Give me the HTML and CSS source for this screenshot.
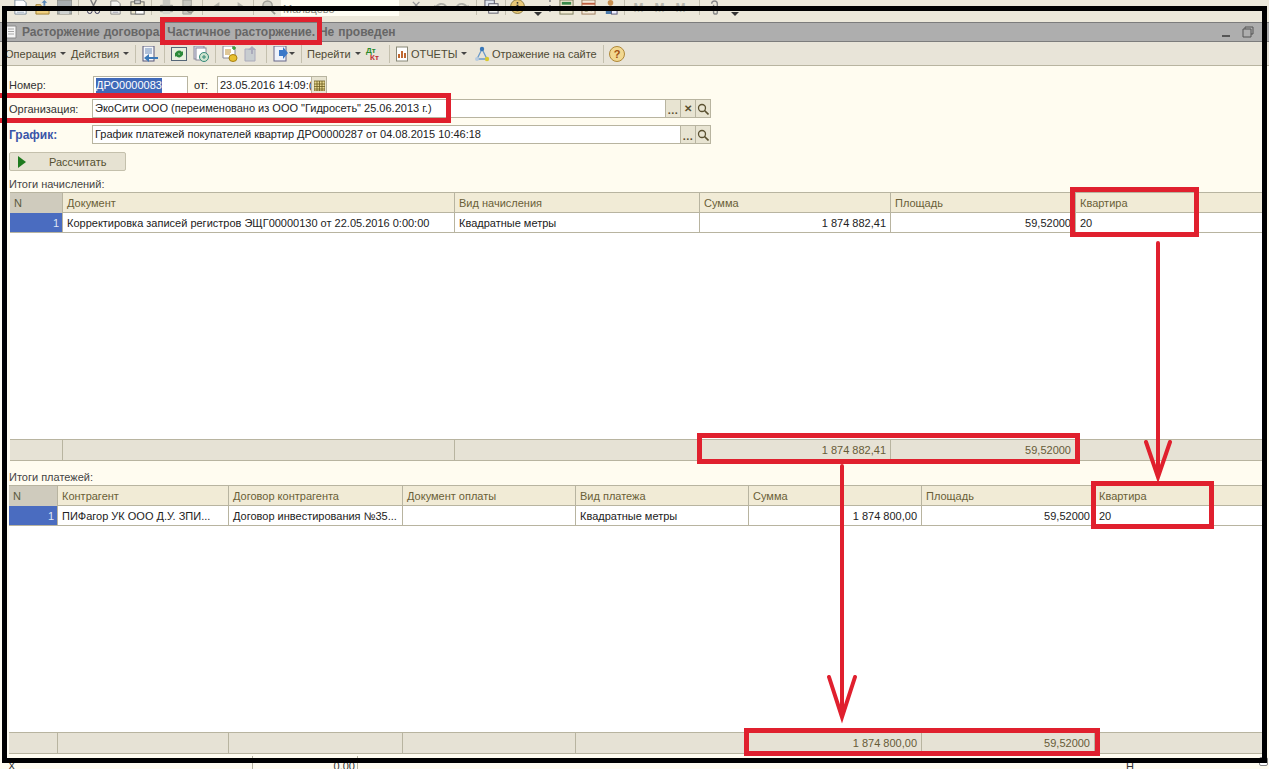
FILE: index.html
```html
<!DOCTYPE html>
<html lang="ru">
<head>
<meta charset="utf-8">
<title>Расторжение договора</title>
<link rel="stylesheet" href="styles.css">
</head>
<body>
<div class="app">
  <div class="topbar">
    <span class="tb"><svg viewBox="0 0 16 16"><path d="M2 0h9l3 3v12H2z" fill="#fff" stroke="#7a8a9a"/><path d="M4 11h8M4 13h8" stroke="#9ab"/></svg></span>
    <span class="tb"><svg viewBox="0 0 16 16"><path d="M1 5h5l1 2h8v8H1z" fill="#f0d080" stroke="#a08030"/><path d="M10 0l3 3h-2v3h-2V3H7z" fill="#5a88b8"/></svg></span>
    <span class="tb"><svg viewBox="0 0 16 16"><rect x="0" y="0" width="16" height="15" fill="#a8aeb0" stroke="#8a8a80"/><rect x="3" y="9" width="10" height="6" fill="#cfd2d0"/></svg></span>
    <i class="sep"></i>
    <span class="tb"><svg viewBox="0 0 16 16"><path d="M5 0l5 10M11 0L6 10" stroke="#777" stroke-width="1.5" fill="none"/><circle cx="4" cy="12" r="2.4" fill="none" stroke="#335"/><circle cx="12" cy="12" r="2.4" fill="none" stroke="#335"/></svg></span>
    <span class="tb"><svg viewBox="0 0 16 16"><path d="M3 1h7l3 3v11H3z" fill="#f4f4f0" stroke="#888"/><path d="M5 7h6M5 10h6M5 13h6" stroke="#99a"/></svg></span>
    <span class="tb"><svg viewBox="0 0 16 16"><rect x="1" y="2" width="14" height="13" fill="#eee8d0" stroke="#666"/><rect x="5" y="0" width="6" height="4" fill="#ccc" stroke="#666"/><rect x="6" y="8" width="9" height="7" fill="#fff" stroke="#777"/></svg></span>
    <i class="sep"></i>
    <span class="tb"><svg viewBox="0 0 16 16"><rect x="1" y="5" width="14" height="8" rx="1" fill="#a9a9a2"/><rect x="4" y="0" width="8" height="6" fill="#c8c8c0"/><rect x="4" y="11" width="8" height="4" fill="#d8d8d0"/></svg></span>
    <span class="tb"><svg viewBox="0 0 16 16"><path d="M2 0h9v15H2z" fill="#c8c8c0" stroke="#a0a098"/><circle cx="10" cy="10" r="3.5" fill="#b0b0a8" stroke="#8a8a82"/></svg></span>
    <i class="sep"></i>
    <span class="tb"><svg viewBox="0 0 16 16"><path d="M10 2L3 7l7 5z" fill="#b8b8ae"/></svg></span>
    <span class="tb"><svg viewBox="0 0 16 16"><path d="M6 2l7 5-7 5z" fill="#b8b8ae"/></svg></span>
    <i class="sep"></i>
    <span class="tb"><svg viewBox="0 0 16 16"><circle cx="7" cy="6" r="5" fill="#cfcfc4" stroke="#a0a098" stroke-width="1.5"/><path d="M10 10l5 5" stroke="#9a9a90" stroke-width="2"/></svg></span>
    <span class="searchbox">Мальцево</span>
    <span class="tb tb-x"><svg viewBox="0 0 16 16"><path d="M2 2l7 7M9 2L2 9" stroke="#999" stroke-width="1.5"/></svg></span>
    <span class="tb"><svg viewBox="0 0 16 16"><path d="M3 9a6 6 0 0 1 11-2" fill="none" stroke="#b0b0a8" stroke-width="2"/><path d="M1 5l2 5 4-2z" fill="#b0b0a8"/></svg></span>
    <span class="tb"><svg viewBox="0 0 16 16"><path d="M13 9a6 6 0 0 0-11-2" fill="none" stroke="#b0b0a8" stroke-width="2"/><path d="M15 5l-2 5-4-2z" fill="#b0b0a8"/></svg></span>
    <i class="sep"></i>
    <span class="tb"><svg viewBox="0 0 16 16"><rect x="1" y="0" width="10" height="11" fill="#dfe6ee" stroke="#556"/><rect x="5" y="4" width="10" height="10" fill="#f4f4f0" stroke="#556"/></svg></span>
    <i class="sep"></i>
    <span class="tb tb-wide"><svg class="ic-info" viewBox="0 0 16 16"><circle cx="8" cy="7" r="7.4" fill="#e8c878" stroke="#8a7a40"/><path d="M8 5v7" stroke="#333" stroke-width="2"/><circle cx="8" cy="3" r="1" fill="#333"/></svg><b class="drop"></b></span>
    <i class="dots"></i>
    <span class="tb"><svg viewBox="0 0 16 16"><rect x="1" y="0" width="14" height="15" fill="#eee8d0" stroke="#7a7a5a"/><rect x="3" y="2" width="10" height="3" fill="#3a8a4a"/><path d="M4 8h2M7 8h2M10 8h2M4 11h2M7 11h2M10 11h2" stroke="#553" stroke-width="1.5"/></svg></span>
    <span class="tb"><svg viewBox="0 0 16 16"><rect x="1" y="0" width="14" height="15" fill="#f2e8d8" stroke="#9a7a5a"/><path d="M1 4h14" stroke="#c06040" stroke-width="2"/><path d="M4 7h3l-2 3h2v2H4M9 7h2v5" stroke="#996" fill="none"/></svg></span>
    <span class="tb"><svg viewBox="0 0 16 16"><circle cx="8" cy="3" r="3" fill="#c89050"/><path d="M3 15V9q0-2 5-2t5 2v6z" fill="#4a78a8"/><rect x="9" y="10" width="6" height="5" fill="#eef" stroke="#557"/></svg></span>
    <i class="sep"></i>
    <span class="mem">M</span><span class="mem">M</span><span class="mem">M</span>
    <i class="sep sep-mem"></i>
    <span class="tb"><svg viewBox="0 0 16 16"><path d="M5 4a3 3 0 0 1 6 0v9a2 2 0 0 1-4 0V5" fill="none" stroke="#888" stroke-width="1.5"/></svg></span>
    <b class="drop"></b>
  </div>

  <div class="titlebar">
    <svg class="title-doc" viewBox="0 0 12 14"><path d="M1 1h10v12H1z" fill="#f6f6f6" stroke="#8a8a8a"/><path d="M3 4h6M3 6.5h6M3 9h6" stroke="#a8a8a8"/></svg>
    <span class="title-text">Расторжение договора: Частичное расторжение. Не проведен</span>
    <span class="win-min"></span>
    <svg class="win-restore" viewBox="0 0 12 12"><path d="M3 3V1h8v7H9M1 3h8v8H1z" fill="none" stroke="#555"/></svg>
  </div>

  <div class="toolbar">
    <span class="tool-text tool-first">Операция<b class="caret"></b></span>
    <span class="tool-text tool-act">Действия<b class="caret"></b></span>
    <i class="tsep"></i>
    <span class="ti"><svg viewBox="0 0 16 16"><rect x="1" y="0" width="11" height="15" fill="#f4f6fa" stroke="#557"/><path d="M3 3h7M3 5h7M3 7h7" stroke="#6a8ab8"/><path d="M16 11H7V8l-5 4 5 4v-3h9z" fill="#3a78b8"/></svg></span>
    <i class="tsep"></i>
    <span class="ti"><svg viewBox="0 0 16 16"><rect x="0.5" y="1.5" width="15" height="13" fill="#e8f0e0" stroke="#567"/><path d="M4 8a4 4 0 0 1 7-2l1-1v4H8l1-1a2.500 2.500 0 0 0-4 1zM12 8a4 4 0 0 1-7 2l-1 1V7h4L7 8a2.500 2.500 0 0 0 4-1z" fill="#2a8a3a"/></svg></span>
    <span class="ti"><svg viewBox="0 0 16 16"><rect x="1" y="0" width="10" height="13" fill="#dde" stroke="#889"/><rect x="3" y="2" width="10" height="12" fill="#fff" stroke="#889"/><circle cx="11" cy="11" r="4.500" fill="#cfe4cf" stroke="#387"/><path d="M9 11h4M11 9v4" stroke="#387"/></svg></span>
    <i class="tsep"></i>
    <span class="ti"><svg viewBox="0 0 16 16"><path d="M1 0h9l3 3v9H1z" fill="#fff" stroke="#889"/><path d="M3 4h6M3 6h6M3 8h5" stroke="#c09030"/><ellipse cx="11" cy="12" rx="4" ry="3.500" fill="#e8c030" stroke="#a88010"/><path d="M12 0v4M10 2h4" stroke="#3a9a3a" stroke-width="1.500"/></svg></span>
    <span class="ti"><svg viewBox="0 0 16 16"><path d="M1 3h10v12H1z" fill="#c8cdd0" stroke="#aab"/><path d="M8 0l4 4h-3v4H7V4H4z" fill="#aab"/></svg></span>
    <i class="tsep"></i>
    <span class="ti ti-drop"><svg viewBox="0 0 16 16"><rect x="1" y="0" width="12" height="15" fill="#eef2fa" stroke="#668"/><path d="M6 4h4V1l5 6-5 6v-3H6z" fill="#3a78c8"/></svg><b class="caret"></b></span>
    <i class="tsep"></i>
    <span class="tool-text tool-go">Перейти<b class="caret"></b></span>
    <span class="dtkt"><span class="dt">Дт</span><span class="kt">Кт</span></span>
    <i class="tsep"></i>
    <span class="ti ti-rep"><svg viewBox="0 0 12 16"><rect x="0.5" y="1" width="11" height="14" fill="#fff" stroke="#887"/><path d="M3 12V8M6 12V5M9 12V7" stroke="#c06830" stroke-width="2"/></svg></span>
    <span class="tool-text tool-rep">ОТЧЕТЫ<b class="caret"></b></span>
    <span class="ti ti-site"><svg viewBox="0 0 16 16"><path d="M8 3L3 13M8 3l5 10M3 13h10" stroke="#6a9ac8" stroke-width="1.300" fill="none"/><circle cx="8" cy="3" r="2.200" fill="#3a78b8"/><circle cx="3" cy="13" r="2" fill="#b8cce0"/><circle cx="13" cy="13" r="2.200" fill="#d8c830"/></svg></span>
    <span class="tool-text tool-site">Отражение на сайте</span>
    <i class="tsep tsep-help"></i>
    <span class="help">?</span>
  </div>

  <div class="form">
    <div class="row row-num">
      <label class="lbl">Номер:</label>
      <span class="inp inp-num"><span class="selected">ДРО0000083</span></span>
      <label class="lbl-from">от:</label>
      <span class="inp inp-date">23.05.2016 14:09:(</span>
      <span class="btn-cal"><svg viewBox="0 0 11 11"><path d="M0 1h11v10H0zM0 4h11M0 6.500h11M0 9h11M3 1v10M5.500 1v10M8 1v10" fill="#e8d890" stroke="#6a5a20" stroke-width=".8"/></svg></span>
    </div>
    <div class="row row-org">
      <label class="lbl">Организация:</label>
      <span class="inp inp-org">ЭкоСити ООО (переименовано из ООО "Гидросеть" 25.06.2013 г.)</span>
      <span class="ib ib-dots">...</span>
      <span class="ib ib-x">✕</span>
      <span class="ib"><svg viewBox="0 0 12 12"><circle cx="5" cy="5" r="3.500" fill="none" stroke="#5a5030" stroke-width="1.300"/><path d="M7.500 7.500l4 4" stroke="#5a5030" stroke-width="1.600"/></svg></span>
    </div>
    <div class="row row-graph">
      <label class="lbl lbl-link">График:</label>
      <span class="inp inp-graph">График платежей покупателей квартир ДРО0000287 от 04.08.2015 10:46:18</span>
      <span class="ib ib-dots">...</span>
      <span class="ib"><svg viewBox="0 0 12 12"><circle cx="5" cy="5" r="3.500" fill="none" stroke="#5a5030" stroke-width="1.300"/><path d="M7.500 7.500l4 4" stroke="#5a5030" stroke-width="1.600"/></svg></span>
    </div>
    <div class="calc"><svg viewBox="0 0 8 12"><path d="M0 0l8 6-8 6z" fill="#1e7a1e"/></svg><span class="calc-text">Рассчитать</span></div>

    <div class="caption caption-one">Итоги начислений:</div>
    <div class="grid grid-one">
      <div class="head">
        <span class="hc hc-n">N</span><span class="hc">Документ</span><span class="hc">Вид начисления</span><span class="hc">Сумма</span><span class="hc">Площадь</span><span class="hc">Квартира</span>
      </div>
      <div class="datarow">
        <span class="dc dc-n">1</span><span class="dc">Корректировка записей регистров ЭЩГ00000130 от 22.05.2016 0:00:00</span><span class="dc">Квадратные метры</span><span class="dc dc-r">1 874 882,41</span><span class="dc dc-r">59,52000</span><span class="dc">20</span>
      </div>
      <div class="blank"></div>
      <div class="foot">
        <span class="fc"></span><span class="fc"></span><span class="fc"></span><span class="fc fc-r">1 874 882,41</span><span class="fc fc-r">59,52000</span><span class="fc"></span>
      </div>
    </div>

    <div class="caption caption-two">Итоги платежей:</div>
    <div class="grid grid-two">
      <div class="head">
        <span class="hc hc-n">N</span><span class="hc">Контрагент</span><span class="hc">Договор контрагента</span><span class="hc">Документ оплаты</span><span class="hc">Вид платежа</span><span class="hc">Сумма</span><span class="hc">Площадь</span><span class="hc">Квартира</span>
      </div>
      <div class="datarow">
        <span class="dc dc-n">1</span><span class="dc">ПИФагор УК ООО Д.У. ЗПИ...</span><span class="dc">Договор инвестирования №35...</span><span class="dc"></span><span class="dc">Квадратные метры</span><span class="dc dc-r">1 874 800,00</span><span class="dc dc-r">59,52000</span><span class="dc">20</span>
      </div>
      <div class="blank"></div>
      <div class="foot">
        <span class="fc"></span><span class="fc"></span><span class="fc"></span><span class="fc"></span><span class="fc"></span><span class="fc fc-r">1 874 800,00</span><span class="fc fc-r">59,52000</span><span class="fc"></span>
      </div>
    </div>

    <div class="status">
      <span class="st st-a">Х</span><span class="st st-b">0,00</span><span class="st st-c">Н</span><i class="st-check"></i>
    </div>
  </div>

  <svg class="markup" viewBox="0 0 1269 769">
    <g fill="none" stroke="#e0202e" stroke-width="5">
      <path d="M0 95.500H448.500V120.500H0"/>
    </g>
    <path d="M4.500 8.500H1264.500V760.500H4.500z" fill="none" stroke="#000" stroke-width="5"/>
    <g fill="none" stroke="#e0202e" stroke-width="5">
      <rect x="162.500" y="19.500" width="157" height="23"/>
      <rect x="1072.500" y="189.500" width="124" height="45"/>
      <rect x="699.500" y="435.500" width="378" height="26"/>
      <rect x="1093.500" y="483.500" width="118" height="43"/>
      <rect x="746.500" y="730.500" width="351" height="23"/>
    </g>
    <g fill="none" stroke="#e0202e" stroke-width="4" stroke-linecap="round">
      <path d="M1158 243V476M1146 442L1158 477L1170 442"/>
      <path d="M842 466V716M829 677L842 717L855 677"/>
    </g>
  </svg>
</div>
</body>
</html>
```

FILE: styles.css
```css
* { box-sizing: border-box; }
html, body { margin: 0; padding: 0; height: 769px; overflow: hidden; }
body { font-family: "Liberation Sans", Arial, sans-serif; font-size: 11px; color: #222; background: #fffcf0; }

.app { position: relative; width: 1269px; height: 769px; overflow: hidden; display: flex; flex-direction: column; }

/* main toolbar, cut off by the top of the picture */
.topbar { height: 22px; flex: none; display: flex; align-items: flex-start; padding-left: 9px; background: #ece8da; overflow: hidden; }
.tb { width: 22px; height: 16px; flex: none; display: flex; justify-content: center; }
.tb svg { width: 15px; height: 15px; }
.tb-x { margin-left: 2px; }
.tb-wide { width: 34px; gap: 3px; }
.ic-info { flex: none; }
.sep { width: 1px; height: 15px; margin: 0 3px; flex: none; background: #c4c0b0; }
.sep-mem { margin-left: 8px; }
.searchbox { width: 118px; height: 16px; margin: 0 6px 0 2px; flex: none; padding-left: 2px; background: #fffef4; color: #8a8a80; line-height: 18px; }
.drop { width: 0; height: 0; margin-top: 12px; margin-left: 6px; border: 4px solid transparent; border-top: 4px solid #333; border-bottom: 0; flex: none; }
.dots { width: 2px; height: 14px; margin: 0 4px 0 6px; flex: none; background: repeating-linear-gradient(#999 0 2px, transparent 2px 5px); }
.mem { width: 21px; flex: none; text-align: center; color: #b8b8ae; font-weight: bold; font-size: 12px; line-height: 17px; }

/* window title */
.titlebar { height: 20px; flex: none; display: flex; align-items: center; padding: 0 15px 0 5px; background: #aeaeae; border-top: 1px solid #7c7c7c; border-bottom: 1px solid #7c7c7c; }
.title-doc { width: 12px; height: 14px; flex: none; }
.title-text { margin-left: 5px; flex: 1; font-weight: bold; font-size: 12px; word-spacing: .6px; color: #666; }
.win-min { width: 8px; height: 2px; margin: 8px 12px 0 0; background: #555; }
.win-restore { width: 12px; height: 12px; }

/* form toolbar */
.toolbar { height: 24px; flex: none; display: flex; align-items: center; background: #e8e4d8; border-bottom: 1px solid #b8b4a0; color: #4f4a34; font-size: 11px; }
.tool-text { white-space: nowrap; }
.caret { display: inline-block; width: 0; height: 0; margin: 0 0 2px 4px; vertical-align: middle; border: 3px solid transparent; border-top: 3px solid #444; border-bottom: 0; }
.tool-first { margin-left: 5px; width: 61px; }
.tool-act { margin-left: 5px; width: 61px; }
.tsep { width: 1px; height: 18px; margin: 0 3px; flex: none; background: #c4c0ae; }
.ti { width: 16px; height: 16px; margin: 0 3px; flex: none; display: flex; }
.ti svg { width: 16px; height: 16px; flex: none; }
.ti-drop { width: 22px; align-items: center; gap: 0; }
.ti-drop .caret { margin: 0; }
.tool-go { width: 56px; margin-left: 2px; }
.dtkt { width: 18px; margin: 0 2px 0 3px; display: flex; flex-direction: column; font-size: 8px; font-weight: bold; line-height: 7px; }
.dt { color: #2a8a2a; }
.kt { color: #c03030; padding-left: 4px; }
.ti-rep { width: 12px; }
.ti-rep svg { width: 12px; }
.tool-rep { width: 57px; }
.ti-site { margin-left: 6px; margin-right: 2px; }
.tool-site { width: 104px; }
.tsep-help { margin: 0 3px 0 7px; }
.help { width: 16px; height: 16px; margin-left: 2px; border-radius: 50%; background: #f2d890; border: 1px solid #b08838; text-align: center; color: #a05010; font-weight: bold; line-height: 14px; }

/* form */
.form { flex: 1; min-height: 0; background: #fffcf0; }
.row { height: 19px; display: flex; align-items: stretch; }
.row-num { margin: 10px 0 0 9px; }
.row-org { margin: 4px 0 0 9px; }
.row-graph { margin: 7px 0 0 9px; }
.lbl { width: 83px; flex: none; line-height: 20px; color: #333; }
.row-num .lbl, .lbl-from { line-height: 18px; }
.lbl-link { color: #3a55a8; font-weight: bold; font-size: 12px; }
.inp { flex: none; padding-left: 2px; background: #fff; border: 1px solid #b8b4a0; line-height: 17px; white-space: nowrap; overflow: hidden; color: #222; }
.inp-num { width: 95px; margin-left: 1px; }
.selected { background: #3f69b8; color: #fff; display: inline-block; height: 15px; line-height: 15px; }
.lbl-from { width: 23px; margin-left: 6px; }
.inp-date { width: 95px; }
.btn-cal { width: 15px; flex: none; display: flex; align-items: center; justify-content: center; background: #e8e4d2; border: 1px solid #b8b4a0; border-left: 0; }
.btn-cal svg { width: 11px; height: 11px; }
.inp-org { width: 574px; }
.inp-graph { width: 589px; }
.ib { width: 15px; flex: none; display: flex; align-items: center; justify-content: center; background: #e8e4d2; border: 1px solid #b8b4a0; border-left: 0; color: #5a5030; }
.ib svg { width: 12px; height: 12px; }
.ib-dots { align-items: flex-end; font-weight: bold; letter-spacing: .5px; line-height: 14px; }
.ib-x { font-size: 10px; font-weight: bold; }
.calc { width: 117px; height: 19px; margin: 8px 0 0 9px; display: flex; align-items: center; padding-left: 8px; background: #e6e2d2; border: 1px solid #c4c0ac; border-radius: 2px; color: #555030; }
.calc svg { width: 8px; height: 12px; flex: none; }
.calc-text { margin-left: 23px; }

.caption { height: 14px; line-height: 14px; color: #444; }
.caption-one { margin: 6px 0 0 9px; }
.caption-two { margin: 9px 0 0 9px; }

/* tabular parts */
.grid { width: 1254px; margin-top: 1px; }
.grid-one { margin-left: 10px; }
.grid-two { margin-left: 9px; }
.head, .datarow, .foot { display: grid; }
.grid-one .head, .grid-one .datarow, .grid-one .foot { grid-template-columns: 53px 392px 245px 191px 185px 1fr; }
.grid-two .head, .grid-two .datarow, .grid-two .foot { grid-template-columns: 49px 171px 174px 173px 173px 173px 173px 1fr; }
.head { height: 21px; background: #f1ebd6; border-top: 1px solid #b8b4a0; border-bottom: 1px solid #b8b4a0; }
.hc { padding-left: 4px; line-height: 21px; color: #6a5f38; border-right: 1px solid #b8b4a0; }
.hc:last-child, .dc:last-child, .fc:last-child { border-right: 0; }
.hc-n { background: #cfcbbd; color: #5a5a40; }
.datarow { height: 20px; background: #fff; border-bottom: 1px solid #b8b4a0; }
.dc { padding: 0 4px; line-height: 21px; white-space: nowrap; overflow: hidden; color: #222; border-right: 1px solid #b8b4a0; }
.dc-n { background: #4a6cc0; color: #dfe6f6; text-align: right; padding-right: 3px; }
.dc-r { text-align: right; }
.blank { height: 206px; background: #fff; }
.foot { height: 22px; background: #e6e2d5; border-top: 1px solid #b8b4a0; border-bottom: 1px solid #b8b4a0; }
.fc { line-height: 20px; padding: 0 4px; color: #665c38; border-right: 1px solid #b8b4a0; }
.fc-r { text-align: right; }

/* status strip below the frame */
.status { position: relative; height: 16px; margin-top: 2px; display: grid; grid-template-columns: 253px 105px 1fr; line-height: 20px; color: #333; }
.st { padding-left: 8px; }
.st-a { border-right: 1px solid #b8b4a0; }
.st-b { border-right: 1px solid #b8b4a0; text-align: right; padding-right: 2px; }
.st-c { padding-left: 768px; }
.st-check { position: absolute; right: 1px; top: 1px; width: 9px; height: 9px; background: #fff; border: 1px solid #888; border-radius: 2px; }

/* hand-drawn annotations lying over the screenshot */
.markup { position: absolute; left: 0; top: 0; width: 1269px; height: 769px; pointer-events: none; }
```
